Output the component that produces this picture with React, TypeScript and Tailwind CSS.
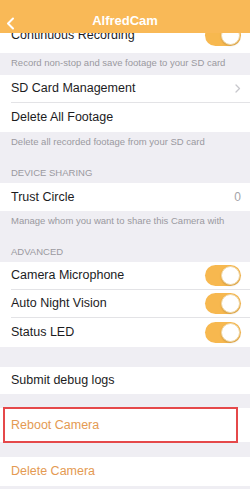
import React from "react";

const Toggle = () => (
  <div className="w-[36px] h-[21px] rounded-full bg-[#F7B84F] flex items-center justify-end pr-[1px] shrink-0">
    <div className="w-[19px] h-[19px] rounded-full bg-white border border-[#f1d9a8] shadow-[0_1px_2px_rgba(0,0,0,0.15)]" />
  </div>
);

const Row = ({
  label,
  right,
  divider,
  color = "text-[#1c1c1e]",
  h = "h-[28px]",
}: {
  label: string;
  right?: React.ReactNode;
  divider?: boolean;
  color?: string;
  h?: string;
}) => (
  <div className="bg-white pl-[11px]">
    <div className={`${h} flex items-center justify-between pr-[9px] ${divider ? "border-b border-[#e3e3e6]" : ""}`}>
      <span className={`text-[12.5px] ${color}`}>{label}</span>
      {right}
    </div>
  </div>
);

const Footer = ({ text }: { text: string }) => (
  <div className="px-[11px] pt-[5px] pb-[7px] text-[9.5px] leading-[10px] text-[#9a99a0]">{text}</div>
);

const SectionHeader = ({ text }: { text: string }) => (
  <div className="px-[11px] pt-[14px] pb-[5px] text-[9.5px] leading-[10px] text-[#9a99a0] uppercase">{text}</div>
);

export default function App() {
  return (
    <div className="w-[250px] h-[489px] overflow-hidden bg-[#EFEEF3]" style={{ fontFamily: "'Liberation Sans', Arial, sans-serif" }}>
      <div className="h-[33px] bg-[#F9B957] flex items-end justify-center pb-[3px] relative z-10">
        <svg className="absolute left-[6px] top-[17px]" width="9" height="13" viewBox="0 0 9 13" fill="none">
          <path d="M7 1.5 L2 6.5 L7 11.5" stroke="white" strokeWidth="2" strokeLinecap="round" strokeLinejoin="round" />
        </svg>
        <span className="text-white text-[13px] font-semibold">AlfredCam</span>
      </div>
      <div className="h-[20px] overflow-hidden bg-white">
        <div className="-mt-[12px] h-[28px] flex items-center justify-between pl-[11px] pr-[9px]">
          <span className="text-[12.5px] text-[#1c1c1e]">Continuous Recording</span>
          <Toggle />
        </div>
      </div>
      <Footer text="Record non-stop and save footage to your SD card" />
      <Row
        label="SD Card Management"
        divider
        right={
          <svg width="6" height="9" viewBox="0 0 6 9" fill="none">
            <path d="M1 1 L4.5 4.5 L1 8" stroke="#c7c7cc" strokeWidth="1.3" strokeLinecap="round" strokeLinejoin="round" />
          </svg>
        }
      />
      <Row label="Delete All Footage" h="h-[29px]" />
      <Footer text="Delete all recorded footage from your SD card" />
      <SectionHeader text="Device Sharing" />
      <Row label="Trust Circle" right={<span className="text-[12px] text-[#a4a4a9]">0</span>} />
      <Footer text="Manage whom you want to share this Camera with" />
      <SectionHeader text="Advanced" />
      <Row label="Camera Microphone" divider right={<Toggle />} />
      <Row label="Auto Night Vision" divider right={<Toggle />} />
      <Row label="Status LED" h="h-[29px]" right={<Toggle />} />
      <div className="h-[20px]" />
      <Row label="Submit debug logs" h="h-[27px]" />
      <div className="h-[14px]" />
      <div className="relative">
        <Row label="Reboot Camera" color="text-[#E49A52]" h="h-[34px]" />
        <div className="absolute left-[3px] top-[-1px] w-[235px] h-[36px] border-2 border-[#E5484A] pointer-events-none" />
      </div>
      <div className="h-[15px]" />
      <Row label="Delete Camera" color="text-[#E49A52]" h="h-[29px]" />
    </div>
  );
}
